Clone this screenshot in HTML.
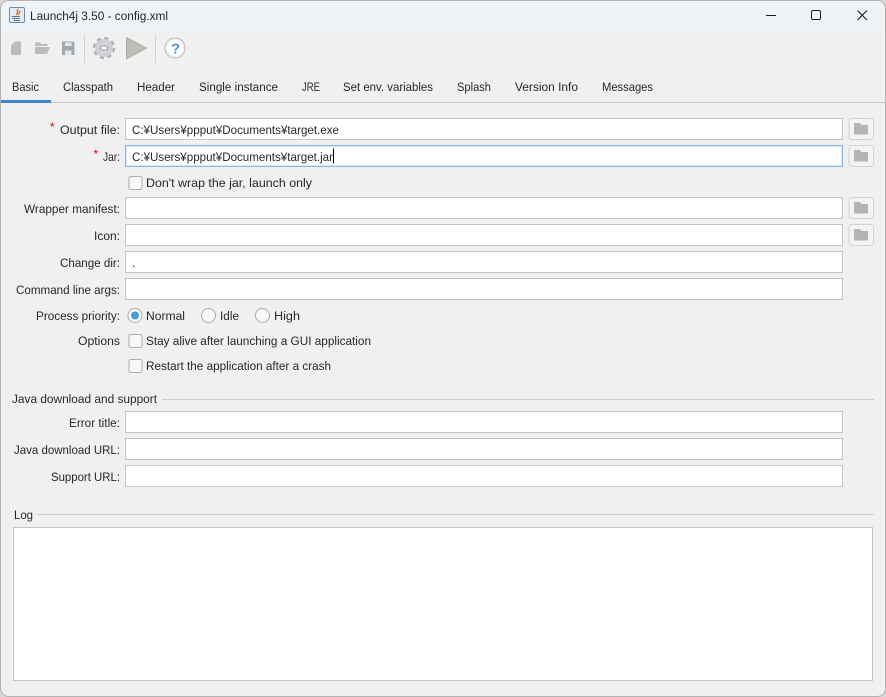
<!DOCTYPE html>
<html><head><meta charset="utf-8"><title>Launch4j 3.50 - config.xml</title>
<style>
html,body{margin:0;padding:0;width:886px;height:697px;overflow:hidden;background:#d8d8d8}
svg{display:block}
text{font-family:"Liberation Sans",sans-serif;font-size:12.3px;fill:#262626}
.f{fill:#fff;stroke:#c4c4c4;stroke-width:1}
.b{fill:#f3f3f3;stroke:#d2d2d2;stroke-width:1}
.c{fill:#f8f8f8;stroke:#ababab;stroke-width:1}
.d{fill:#b4b4b4}
</style></head><body>
<svg width="886" height="697" viewBox="0 0 886 697" xmlns="http://www.w3.org/2000/svg">
<!-- window -->
<rect x="0.5" y="0.5" width="885" height="696" rx="8" fill="#f0f0f0" stroke="#b4b4b4"/>
<path d="M1 31V9a8 8 0 0 1 8-8H877a8 8 0 0 1 8 8V31Z" fill="#eef3f8"/>
<!-- app icon -->
<rect x="9.500" y="7.500" width="15" height="15" rx="1.500" fill="#e4ebf3" stroke="#6e8aa6"/>
<path d="M18.500 9c-3 2 1 3-2.500 6M20.500 11c-2 1-1 2-2 4" fill="none" stroke="#e0762a" stroke-width="1.400"/>
<path d="M12 16.500h8M12.500 18.500h7M14 20.500h6" stroke="#48709a" stroke-width="1"/>
<text x="30" y="20" textLength="138" lengthAdjust="spacingAndGlyphs">Launch4j 3.50 - config.xml</text>
<!-- window controls -->
<path d="M766 15.500h10" stroke="#1a1a1a" stroke-width="1"/>
<rect x="811.500" y="10.500" width="9" height="9" rx="1.500" fill="none" stroke="#1a1a1a"/>
<path d="M857.500 10.500l9.500 9.500M867 10.500l-9.500 9.500" stroke="#1a1a1a" stroke-width="1.100"/>
<!-- toolbar -->
<path d="M11 45.500l4-4h6v13.500h-10Z" fill="#bcbcbc"/>
<path d="M35 45v-2.500h5l1.500 1.500h6v2H35Zm0 2h15l-3 7H35Z" fill="#bcbcbc"/>
<path d="M62 41.500h11.500l1 1v12.500H62Z" fill="#9fa9b3"/>
<rect x="65" y="42.500" width="6.500" height="3.500" fill="#e6e6e6"/><rect x="65" y="50.500" width="6.500" height="4.500" fill="#e6e6e6"/>
<path d="M84.500 35v28M155.500 35v28" stroke="#d2d2d2"/>
<g transform="translate(104 48)">
<circle r="9.500" fill="none" stroke="#a9a9b6" stroke-width="3" stroke-dasharray="4 3.460"/>
<circle r="6.800" fill="none" stroke="#cfcfd8" stroke-width="4.500"/>
<ellipse rx="3.800" ry="2.800" fill="#efefef" stroke="#8f8f9a"/>
</g>
<path d="M126.500 37.500L146.500 48 126.500 59Z" fill="#bdbdb9" stroke="#a9b0a9"/>
<circle cx="175" cy="48" r="10" fill="#fff" stroke="#b5b5b5"/>
<circle cx="175" cy="48" r="8.500" fill="#fff" stroke="#e3ebf3"/>
<text x="171" y="53.500" style="font-size:15px;font-weight:bold;fill:#4f95dc">?</text>
<!-- tabs -->
<path d="M1 102.500H885" stroke="#c4c4c4"/>
<rect x="1" y="100" width="50" height="3" fill="#3f84cc"/>
<text x="12" y="91" textLength="27" lengthAdjust="spacingAndGlyphs">Basic</text>
<text x="63" y="91" textLength="50" lengthAdjust="spacingAndGlyphs">Classpath</text>
<text x="137" y="91" textLength="38" lengthAdjust="spacingAndGlyphs">Header</text>
<text x="199" y="91" textLength="79" lengthAdjust="spacingAndGlyphs">Single instance</text>
<text x="302" y="91" textLength="18" lengthAdjust="spacingAndGlyphs">JRE</text>
<text x="343" y="91" textLength="90" lengthAdjust="spacingAndGlyphs">Set env. variables</text>
<text x="457" y="91" textLength="34" lengthAdjust="spacingAndGlyphs">Splash</text>
<text x="515" y="91" textLength="63" lengthAdjust="spacingAndGlyphs">Version Info</text>
<text x="602" y="91" textLength="51" lengthAdjust="spacingAndGlyphs">Messages</text>
<!-- fields -->
<rect class="f" x="125.500" y="118.500" width="717" height="21"/>
<rect x="125.500" y="145.500" width="717" height="21" fill="#fff" stroke="#8db8e6" stroke-width="1"/>
<rect x="126.500" y="146.500" width="715" height="19" fill="#fff" stroke="#d8e7f7" stroke-width="1"/>
<rect class="f" x="125.500" y="197.500" width="717" height="21"/>
<rect class="f" x="125.500" y="224.500" width="717" height="21"/>
<rect class="f" x="125.500" y="251.500" width="717" height="21"/>
<rect class="f" x="125.500" y="278.500" width="717" height="21"/>
<rect class="f" x="125.500" y="411.500" width="717" height="21"/>
<rect class="f" x="125.500" y="438.500" width="717" height="21"/>
<rect class="f" x="125.500" y="465.500" width="717" height="21"/>
<!-- folder buttons -->
<rect class="b" x="849" y="118.500" width="24.500" height="21" rx="3"/>
<path class="d" d="M854 123h6l1.500 2h6.500v9.500h-14Z"/>
<rect class="b" x="849" y="145.500" width="24.500" height="21" rx="3"/>
<path class="d" d="M854 150h6l1.500 2h6.500v9.500h-14Z"/>
<rect class="b" x="849" y="197.500" width="24.500" height="21" rx="3"/>
<path class="d" d="M854 202h6l1.500 2h6.500v9.500h-14Z"/>
<rect class="b" x="849" y="224.500" width="24.500" height="21" rx="3"/>
<path class="d" d="M854 229h6l1.500 2h6.500v9.500h-14Z"/>
<!-- labels -->
<text x="50" y="131" style="fill:#e00000;font-size:12px">*</text>
<text x="60" y="134" textLength="60" lengthAdjust="spacingAndGlyphs">Output file:</text>
<text x="93.500" y="158" style="fill:#e00000;font-size:12px">*</text>
<text x="103" y="161" textLength="17" lengthAdjust="spacingAndGlyphs">Jar:</text>
<text x="24" y="213" textLength="96" lengthAdjust="spacingAndGlyphs">Wrapper manifest:</text>
<text x="94" y="240" textLength="26" lengthAdjust="spacingAndGlyphs">Icon:</text>
<text x="60" y="267" textLength="60" lengthAdjust="spacingAndGlyphs">Change dir:</text>
<text x="16" y="294" textLength="104" lengthAdjust="spacingAndGlyphs">Command line args:</text>
<text x="36" y="320" textLength="84" lengthAdjust="spacingAndGlyphs">Process priority:</text>
<text x="78" y="345" textLength="42" lengthAdjust="spacingAndGlyphs">Options</text>
<text x="69" y="427" textLength="51" lengthAdjust="spacingAndGlyphs">Error title:</text>
<text x="14" y="454" textLength="106" lengthAdjust="spacingAndGlyphs">Java download URL:</text>
<text x="51" y="481" textLength="69" lengthAdjust="spacingAndGlyphs">Support URL:</text>
<!-- values -->
<text x="132" y="134" textLength="207" lengthAdjust="spacingAndGlyphs">C:¥Users¥ppput¥Documents¥target.exe</text>
<text x="132" y="161" textLength="201" lengthAdjust="spacingAndGlyphs">C:¥Users¥ppput¥Documents¥target.jar</text>
<path d="M333.500 148.500v15" stroke="#000"/>
<text x="132" y="267">.</text>
<!-- checks -->
<rect class="c" x="129" y="176.500" width="13" height="13" rx="2"/>
<text x="146" y="187" textLength="166" lengthAdjust="spacingAndGlyphs">Don't wrap the jar, launch only</text>
<circle cx="135" cy="315.500" r="7" fill="#fff" stroke="#ababab"/>
<circle cx="135" cy="315.500" r="4" fill="#4a98e0"/>
<text x="146" y="320" textLength="39" lengthAdjust="spacingAndGlyphs">Normal</text>
<circle cx="208.500" cy="315.500" r="7" fill="#f8f8f8" stroke="#ababab"/>
<text x="220" y="320" textLength="19" lengthAdjust="spacingAndGlyphs">Idle</text>
<circle cx="262.500" cy="315.500" r="7" fill="#f8f8f8" stroke="#ababab"/>
<text x="274" y="320" textLength="26" lengthAdjust="spacingAndGlyphs">High</text>
<rect class="c" x="129" y="334.500" width="13" height="13" rx="2"/>
<text x="146" y="345" textLength="225" lengthAdjust="spacingAndGlyphs">Stay alive after launching a GUI application</text>
<rect class="c" x="129" y="359.500" width="13" height="13" rx="2"/>
<text x="146" y="370" textLength="185" lengthAdjust="spacingAndGlyphs">Restart the application after a crash</text>
<!-- groups -->
<text x="12" y="403" textLength="145" lengthAdjust="spacingAndGlyphs">Java download and support</text>
<path d="M162 399.500H874M38 514.500H874" stroke="#cdcdcd"/>
<text x="14" y="519" textLength="19" lengthAdjust="spacingAndGlyphs">Log</text>
<rect class="f" x="13.500" y="527.500" width="859" height="153"/>
</svg>
</body></html>
